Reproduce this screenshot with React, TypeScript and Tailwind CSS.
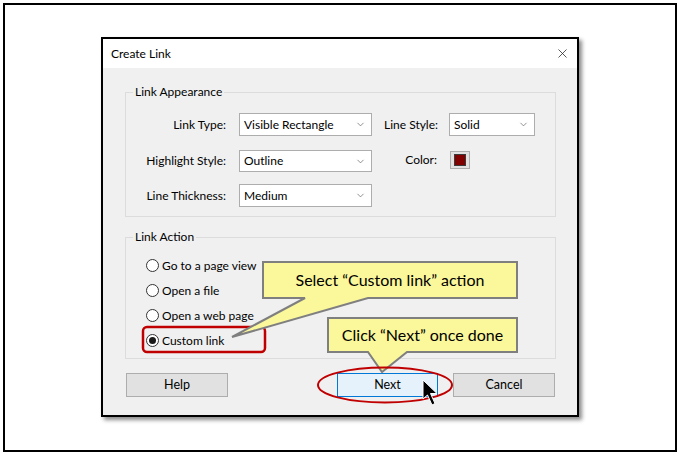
import { ChevronDown, X } from "lucide-react"

// ── Small dialog controls ─────────────────────────────────────────────────────

function Dropdown({ value, width, height }: { value: string; width: string; height: string }) {
  return (
    <div
      className={`flex items-center justify-between border border-[#adadad] bg-white pl-[4px] pr-[5px] ${width} ${height}`}
    >
      <span className="text-[12px] leading-none text-black">{value}</span>
      <ChevronDown className="h-[11px] w-[11px] text-[#606060]" strokeWidth={1.5} />
    </div>
  )
}

function Label({ text, width }: { text: string; width: string }) {
  return (
    <span className={`${width} whitespace-nowrap text-right text-[12px] leading-none text-black`}>{text}</span>
  )
}

function Radio({ label, checked }: { label: string; checked?: boolean }) {
  return (
    <div className="flex h-[25px] items-center">
      <span className="flex h-[13px] w-[13px] items-center justify-center rounded-full border border-[#333333] bg-white">
        {checked && <span className="h-[7px] w-[7px] rounded-full bg-[#1a1a1a]" />}
      </span>
      <span className="ml-[3px] text-[12px] leading-none text-black">{label}</span>
    </div>
  )
}

function cn(...parts: (string | false | undefined)[]) {
  return parts.filter(Boolean).join(" ")
}

function Button({ label, primary, width }: { label: string; primary?: boolean; width: string }) {
  return (
    <div
      className={cn(
        "flex h-[24px] items-center justify-center border text-[12.5px] text-black",
        width,
        primary ? "border-[#0078d7] bg-[#e5f1fb]" : "border-[#adadad] bg-[#e1e1e1]"
      )}
    >
      {label}
    </div>
  )
}

function GroupTitle({ text }: { text: string }) {
  return (
    <span className="absolute -top-[8px] left-[7px] bg-[#f0f0f0] px-[2px] text-[12px] leading-[14px] text-black">
      {text}
    </span>
  )
}

// ── Page ──────────────────────────────────────────────────────────────────────

export default function App() {
  return (
    <div className="relative h-[455px] w-[680px] overflow-hidden bg-white font-['Lato','Liberation_Sans',sans-serif]">
      {/* Outer frame */}
      <div className="m-[3px] h-[449px] border-2 border-black pl-[96px] pt-[32px]">
        {/* Dialog window */}
        <div className="flex h-[380px] w-[478px] flex-col border-2 border-black bg-[#f0f0f0] shadow-[3px_3px_4px_rgba(0,0,0,0.45)]">
          {/* Title bar */}
          <div className="flex h-[29px] items-center justify-between bg-white pl-[8px] pr-[7px]">
            <span className="text-[12px] text-black">Create Link</span>
            <X className="h-[15px] w-[15px] text-[#222]" strokeWidth={1.2} />
          </div>

          {/* Body */}
          <div className="flex flex-1 flex-col pl-[22px] pr-[21px] pt-[24px]">
            {/* Link Appearance */}
            <div className="relative h-[125px] border border-[#dcdcdc] pt-[20px]">
              <GroupTitle text="Link Appearance" />
              <div className="flex h-[23px] items-center">
                <Label text="Link Type:" width="w-[100px]" />
                <div className="ml-[13px]">
                  <Dropdown value="Visible Rectangle" width="w-[133px]" height="h-[23px]" />
                </div>
                <Label text="Line Style:" width="ml-[12px] w-[53px]" />
                <div className="ml-[12px]">
                  <Dropdown value="Solid" width="w-[86px]" height="h-[23px]" />
                </div>
              </div>
              <div className="mt-[14px] flex h-[22px] items-center">
                <Label text="Highlight Style:" width="w-[100px]" />
                <div className="ml-[13px]">
                  <Dropdown value="Outline" width="w-[133px]" height="h-[22px]" />
                </div>
                <Label text="Color:" width="ml-[12px] w-[53px] -mt-[3px]" />
                <div className="-mt-[3px] ml-[13px] flex h-[18px] w-[20px] items-center justify-center border border-[#adadad] bg-[#e1e1e1]">
                  <div className="h-[12px] w-[12px] border border-[#3a3a3a] bg-[#800000]" />
                </div>
              </div>
              <div className="mt-[12px] flex h-[23px] items-center">
                <Label text="Line Thickness:" width="w-[100px]" />
                <div className="ml-[13px]">
                  <Dropdown value="Medium" width="w-[133px]" height="h-[23px]" />
                </div>
              </div>
            </div>

            {/* Link Action */}
            <div className="relative mt-[20px] h-[122px] border border-[#dcdcdc] pl-[20px] pt-[15px]">
              <GroupTitle text="Link Action" />
              <Radio label="Go to a page view" />
              <Radio label="Open a file" />
              <Radio label="Open a web page" />
              <Radio label="Custom link" checked />
            </div>

            {/* Buttons */}
            <div className="mt-[14px] flex pl-[1px] pr-[1px]">
              <Button label="Help" width="w-[102px]" />
              <div className="ml-auto">
                <Button label="Next" primary width="w-[101px]" />
              </div>
              <div className="ml-[15px]">
                <Button label="Cancel" width="w-[102px]" />
              </div>
            </div>
          </div>
        </div>
      </div>

      {/* Annotations */}
      <svg className="pointer-events-none absolute left-0 top-0" width="680" height="455" viewBox="0 0 680 455">
        <rect x="143" y="327" width="122" height="25" rx="4" fill="none" stroke="#c00000" strokeWidth="2.5" />
        <path
          d="M263 262 H517 V298 H368 L232 337 L305 298 H263 Z"
          fill="#fbf79b"
          stroke="#7f7f7f"
          strokeWidth="2"
        />
        <path
          d="M328 318 H517 V352 H407 L382 372 L368 352 H328 Z"
          fill="#fbf79b"
          stroke="#7f7f7f"
          strokeWidth="2"
        />
        <ellipse cx="385" cy="385" rx="67" ry="17.5" fill="none" stroke="#c00000" strokeWidth="2" />
        {/* cursor */}
        <path
          d="M423 380 L423 399 L427.5 395 L432 405 L435 403.5 L430.5 393.5 L437 393.5 Z"
          fill="#000"
          stroke="#fff"
          strokeWidth="1"
          strokeLinejoin="round"
        />
      </svg>

      <div className="absolute left-[263px] top-[262px] flex h-[36px] w-[254px] items-center justify-center text-[16px] text-black">
        Select “Custom link” action
      </div>
      <div className="absolute left-[328px] top-[318px] flex h-[34px] w-[189px] items-center justify-center text-[16px] text-black">
        Click “Next” once done
      </div>
    </div>
  )
}
